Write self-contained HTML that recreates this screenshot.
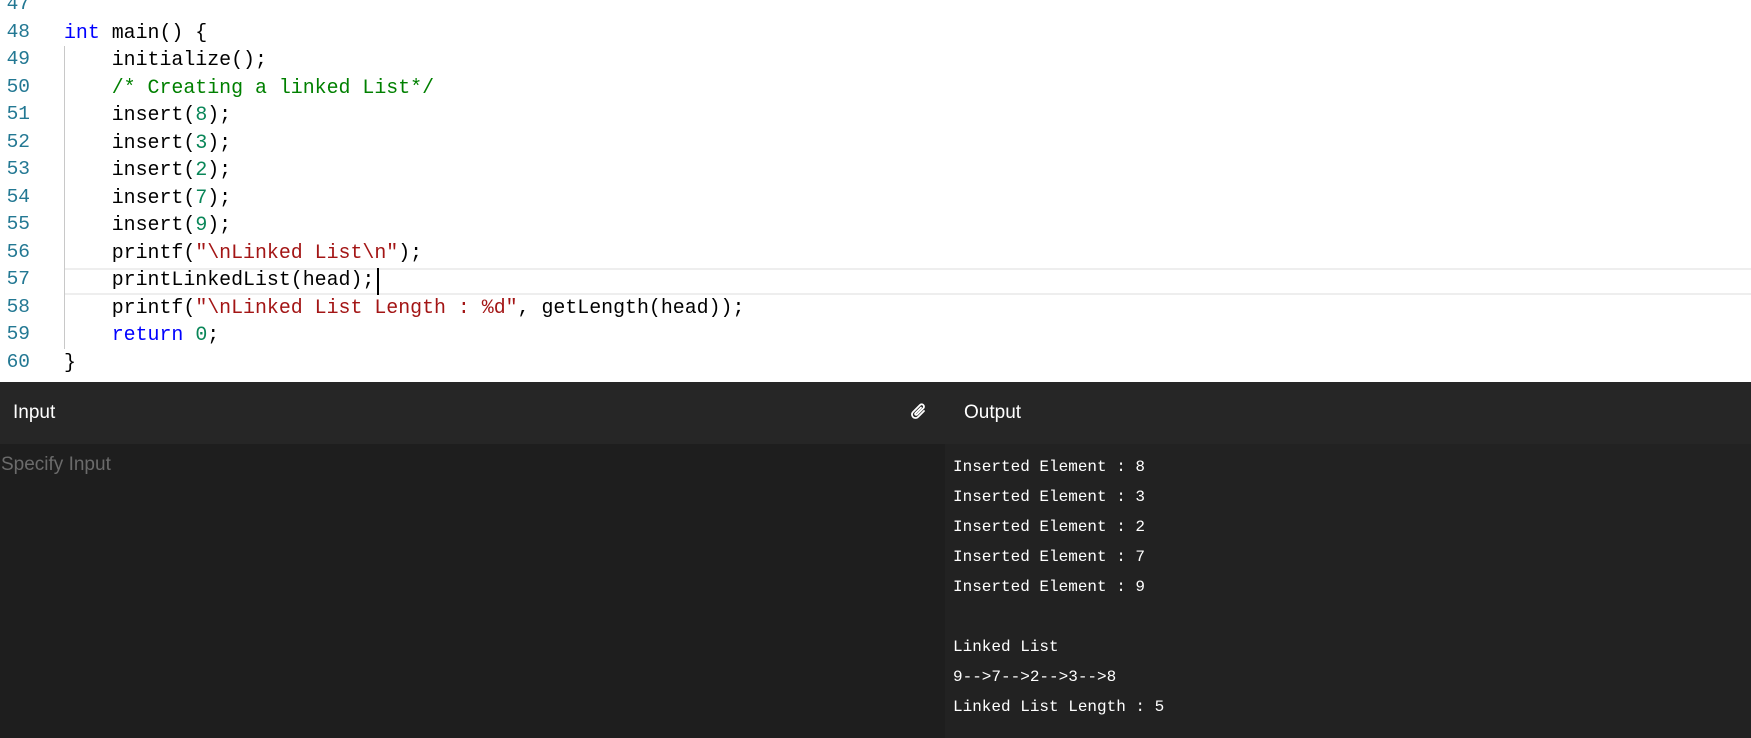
<!DOCTYPE html>
<html><head><style>
body{margin:0;width:1751px;height:738px;overflow:hidden;background:#fff;position:relative;font-family:"Liberation Mono",monospace}
.ed{position:absolute;left:0;top:0;width:1751px;height:382px;background:#fff;overflow:hidden}
.ln{position:absolute;left:0;width:30px;text-align:right;color:#237893;font-size:19.5px;line-height:27.5px}
.cd{position:absolute;left:64px;font-size:19.9px;line-height:27.5px;white-space:pre;color:#000}
.k{color:#0000ff}.c{color:#008000}.n{color:#098658}.s{color:#a31515}
.guide{position:absolute;left:64px;top:46px;width:1px;height:303px;background:#c8c8c8}
.cur{position:absolute;left:64px;top:268px;right:0;height:23px;border-top:2px solid #eee;border-bottom:2px solid #eee}
.caret{position:absolute;left:377px;top:268px;width:2px;height:27px;background:#000}
.hdr{position:absolute;top:382px;height:62px;background:#262626;color:#fff;font-family:"Liberation Sans",sans-serif;font-size:19px;line-height:62px}
.body{position:absolute;top:444px;height:294px}
.out{font-size:16px;color:#fff;position:absolute;left:953px;white-space:pre;line-height:30px}
</style></head><body>
<div class="ed">
<div class="cur"></div>
<div class="guide"></div>
<div class="ln" style="top:-9px">47<br>48<br>49<br>50<br>51<br>52<br>53<br>54<br>55<br>56<br>57<br>58<br>59<br>60</div>
<div class="cd" style="top:-9px">
<span class="k">int</span> main() {
    initialize();
    <span class="c">/* Creating a linked List*/</span>
    insert(<span class="n">8</span>);
    insert(<span class="n">3</span>);
    insert(<span class="n">2</span>);
    insert(<span class="n">7</span>);
    insert(<span class="n">9</span>);
    printf(<span class="s">"\nLinked List\n"</span>);
    printLinkedList(head);
    printf(<span class="s">"\nLinked List Length : %d"</span>, getLength(head));
    <span class="k">return</span> <span class="n">0</span>;
}</div>
<div class="caret"></div>
</div>
<div class="hdr" style="left:0;width:945px"><span style="margin-left:13px">Input</span>
<svg style="position:absolute;left:909px;top:20px" width="20" height="20" viewBox="0 0 20 20"><path d="M15 9 L9 15 a3.5 3.5 0 0 1 -5 -5 L11 3 a2.3 2.3 0 0 1 3.3 3.3 L8 12.6 a1 1 0 0 1 -1.5 -1.5 L12 5.6" fill="none" stroke="#fff" stroke-width="1.8" stroke-linecap="round"/></svg>
</div>
<div class="hdr" style="left:945px;width:806px"><span style="margin-left:19px">Output</span></div>
<div class="body" style="left:0;width:945px;background:#1e1e1e"><div style="font-family:'Liberation Sans',sans-serif;font-size:19px;color:#6b6b6b;position:absolute;left:1px;top:10px">Specify Input</div></div>
<div class="body" style="left:945px;width:806px;background:#222"></div>
<div class="out" style="top:452px">Inserted Element : 8
Inserted Element : 3
Inserted Element : 2
Inserted Element : 7
Inserted Element : 9

Linked List
9--&gt;7--&gt;2--&gt;3--&gt;8
Linked List Length : 5</div>
</body></html>
